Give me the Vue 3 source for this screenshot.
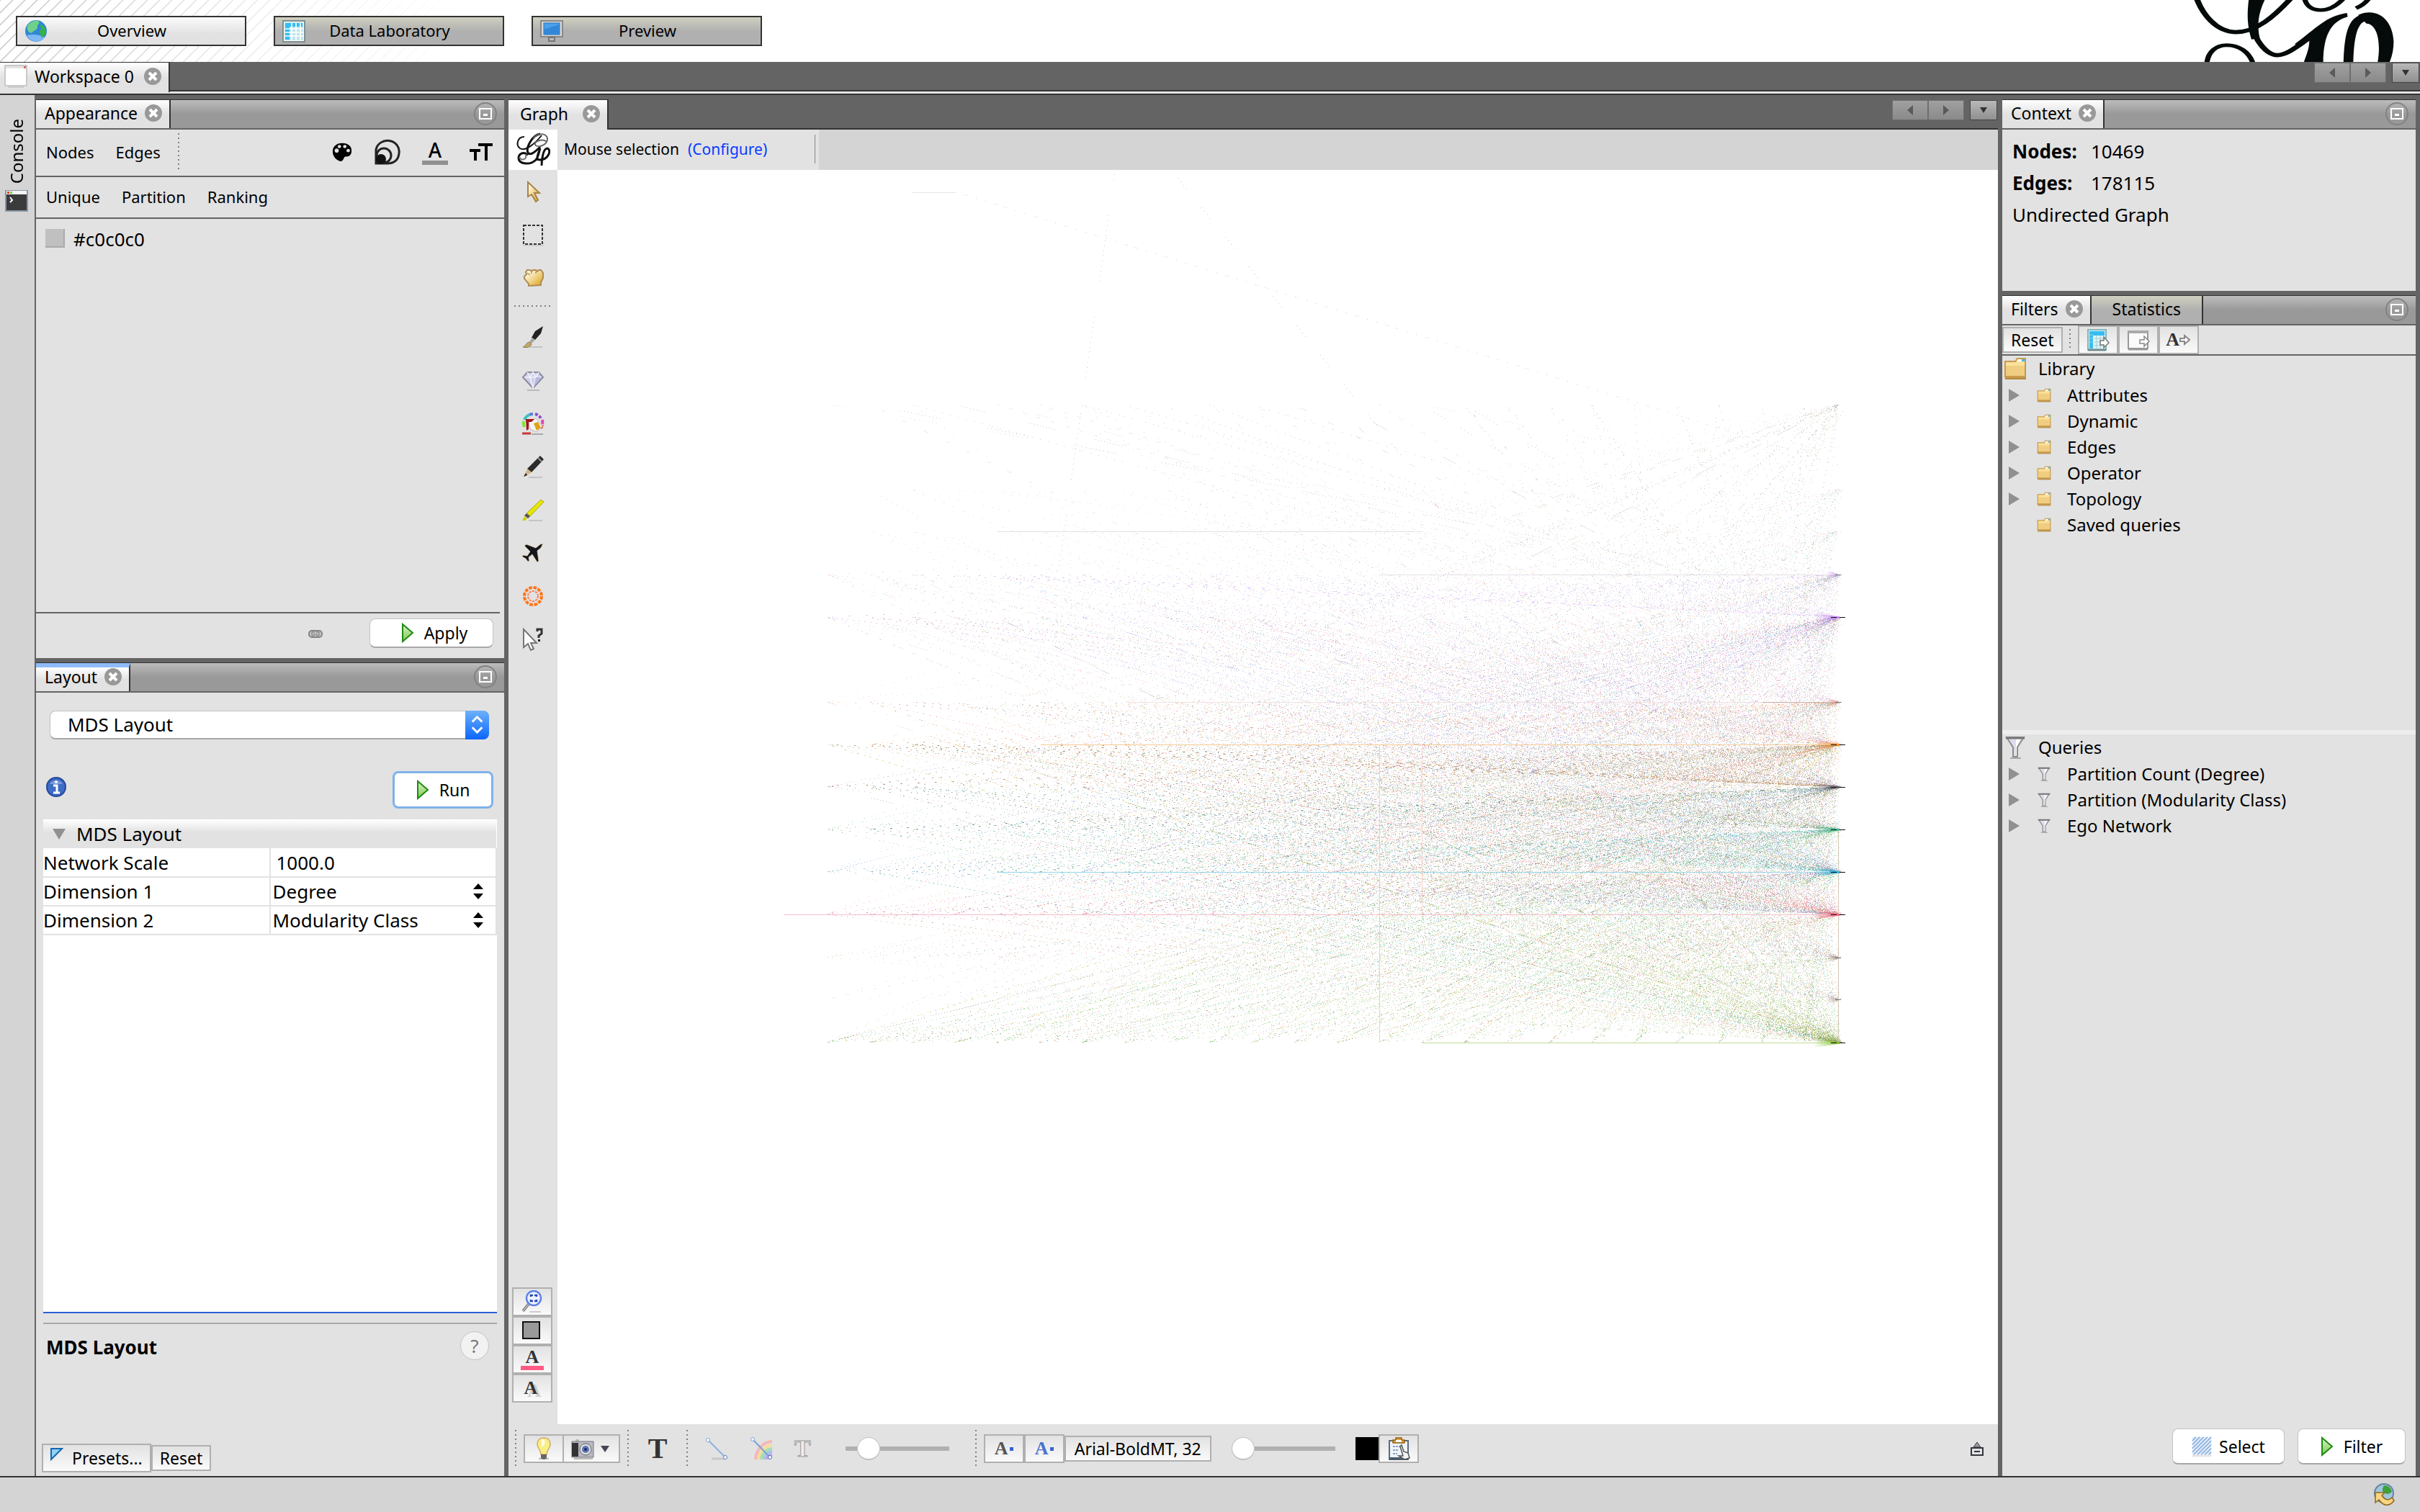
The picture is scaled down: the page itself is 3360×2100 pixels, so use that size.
<script setup>
import { ref, onMounted } from 'vue'

const perspectives = [
  { name: 'Overview', icon: 'globe', active: true },
  { name: 'Data Laboratory', icon: 'sheet', active: false },
  { name: 'Preview', icon: 'screen', active: false },
]

const icons = {
  globe: '<circle cx="16" cy="16" r="15" fill="#2f86d6"/><path d="M3 22a15 15 0 0 0 25 3c-6-4-16-5-25-3z" fill="#7fb8f5"/><path d="M6 6C10 2 18 0 20 3c2 3-3 4-2 7 1 4-5 5-7 8-3 2-6-1-7-4-1-3 0-6 2-8z" fill="#6fd08a"/><path d="M23 7c4 2 7 6 7 10-1 4-3 6-5 8-3 0-2-4-4-6-1-3 3-4 2-7-1-2-2-4 0-5z" fill="#35b34a"/>',
  sheet: '<rect x="1" y="2" width="30" height="29" fill="#fff" stroke="#7d8f8f" stroke-width="2"/><path d="M3 4h26v25H3z" fill="#bfe3ea"/><path d="M4 5h24v5H10v18H4z" fill="#35bdf2"/><path d="M13 5v24M19 5v24M25 5v24M4 13h25M4 18h25M4 23h25" stroke="#fff" stroke-width="1.6"/>',
  screen: '<rect x="1" y="2" width="30" height="22" fill="#d8d8d8" stroke="#888" stroke-width="2"/><rect x="5" y="5" width="22" height="16" fill="#4aa0ea" stroke="#2270b8"/><path d="M5 14L27 7v14H5z" fill="#3387d8"/><path d="M12 25h8v5h-8z" fill="#bbb" stroke="#777" stroke-width="2"/>',
  cursor: '<path d="M9 3v20l5-3 6 10 3-2-5-10h7z" fill="url(#gold)" stroke="#a9834c" stroke-width="2"/>',
  marquee: '<path d="M3 3h26v26H3z" fill="none" stroke="#333" stroke-width="2" stroke-dasharray="4 2"/><path d="M2 31h29" stroke="#bbb"/>',
  hand: '<path d="M10 27v-3l-6-7v-3l3-3-1-3 2-3h4l2 2 2-2h4l2 2 2-2h3l3 4v7l-3 6v4z" fill="url(#gold)" stroke="#b08c55" stroke-width="2"/><path d="M8 9l4 3M14 7v3M20 7v3" stroke="#c9a565" stroke-width="2"/>',
  brush: '<path d="M12 30h17" stroke="#c4c4c4" stroke-width="2"/><path d="M30 1l-3 10-8 9-5-3 5-9z" fill="#222"/><path d="M15 17l4 3-5 5-3-2z" fill="#a5a5a5"/><path d="M11 23l3 3c-2 5-7 5-12 4 4-1 4-6 9-7z" fill="#c0a86a" stroke="#8f7a48"/>',
  diamond: '<path d="M8 30h17" stroke="#b9b9b9" stroke-width="2"/><path d="M8 5h16l6 7-14 15L2 12z" fill="#cfcfe8" stroke="#8b8b9c" stroke-width="2"/><path d="M4 12h24M8 5l4 7 4 15 4-15 4-7M12 12l4-7 4 7" fill="none" stroke="#f4f4ff" stroke-width="1.5"/><path d="M20 12h8L17 25z" fill="#b6b8e0"/>',
  bucket: '<g fill="none" stroke-width="4"><path d="M4 11a13 13 0 0 1 7-7" stroke="#3fc0c0"/><path d="M11 4a13 13 0 0 1 5-1" stroke="#5a7de0"/><path d="M19 3a13 13 0 0 1 8 6" stroke="#8a50c8" stroke-dasharray="4 2"/><path d="M29 11a13 13 0 0 1 0 6" stroke="#e047b0"/><path d="M29 18a13 13 0 0 1-2 5" stroke="#e86a70"/><path d="M3 13a13 13 0 0 0 1 8" stroke="#7fe23c"/></g><path d="M10 15L20 9l9 11-8 8-9-4z" fill="#f4f4f4" stroke="#bbb"/><path d="M17 16l6-2 4 8-6 4z" fill="#e0a516"/><path d="M6 10h12l-4 4h-4v10l-3 2z" fill="#a3161a"/><path d="M1 30h12" stroke="#c8363a" stroke-width="3"/><path d="M14 31h16" stroke="#aaa" stroke-width="2"/>',
  pencil: '<path d="M10 31h19" stroke="#c4c4c4" stroke-width="2"/><path d="M26 1l5 5L14 24l-6-5z" fill="#2b2b2b"/><path d="M8 19l6 5-8 5-3 1 2-4z" fill="#cdb787"/><path d="M6 25l2 3-5 2z" fill="#222"/><path d="M23 4l5 5" stroke="#999" stroke-width="2"/>',
  marker: '<path d="M10 31h19" stroke="#c4c4c4" stroke-width="2"/><path d="M27 2l4 3L12 25l-5-4z" fill="#e6e600" stroke="#a8a820"/><path d="M7 21l5 4-3 3-5-4z" fill="#555"/><path d="M4 25l4 3-3 3H1z" fill="#d0d000"/>',
  plane: '<path d="M30 3l-3 6-5 4 2 14-2 2-7-11-5 4 1 5-2 1-3-4-5-3 1-2 6 1 4-6L4 6l3-2 13 5 6-5z" fill="#15151c" stroke="#e6d3a8" stroke-width=".8"/>',
  sun: '<circle cx="16" cy="16" r="12" fill="none" stroke="#ff7419" stroke-width="4" stroke-dasharray="4.600 1.700"/><circle cx="16" cy="16" r="7" fill="none" stroke="#ff7a55" stroke-width="2" stroke-dasharray="3 1.500"/>',
  help: '<path d="M3 2v25l6-5 4 9 4-2-4-8h8z" fill="#fff" stroke="#777" stroke-width="2"/><path d="M22 5V2h6v6l-4 3v3" fill="none" stroke="#333" stroke-width="3"/><path d="M23 16h3v3h-3z" fill="#222"/>',
  zoomfit: '<path d="M12 30h16" stroke="#ccc" stroke-width="2"/><path d="M11 19L3 29" stroke="#888" stroke-width="4"/><path d="M11 19L3 29" stroke="#ddd" stroke-width="1"/><circle cx="18" cy="11" r="10" fill="#eef4ff" stroke="#5f83e8" stroke-width="2.500"/><path d="M14 9V7h3M19 7h3v2M22 13v2h-3M17 15h-3v-2" fill="none" stroke="#2546b8" stroke-width="2.500"/>',
  square: '<path d="M3 4h23v23H3z" fill="#999" stroke="#111" stroke-width="2"/>',
  bulb: '<path d="M9 30h14" stroke="#bbb" stroke-width="2"/><path d="M16 1c-6 0-9 4-9 9 0 6 5 7 5 14h8c0-7 5-8 5-14 0-5-3-9-9-9z" fill="#f7ef86" stroke="#d6a865" stroke-width="1.500"/><path d="M13 3c3-1 6 2 4 7l-4 4z" fill="#fffde0"/><path d="M12 24h8v5l-3 2h-2l-3-2z" fill="#666"/>',
  camera: '<path d="M4 30h26" stroke="#bbb" stroke-width="2"/><path d="M6 3h5v3H6z" fill="#bbb"/><path d="M1 6h30v22H1z" fill="#b8b8c4" stroke="#777"/><path d="M1 8h9v19H1z" fill="#333"/><circle cx="20" cy="17" r="8" fill="#ddd" stroke="#666"/><circle cx="20" cy="17" r="5" fill="#5d74b5"/><circle cx="20" cy="17" r="2" fill="#182c66"/>',
  edge: '<path d="M9 30h19" stroke="#c8c8c8" stroke-width="3"/><path d="M4 4l24 24" stroke="#8fb0dc" stroke-width="2"/><circle cx="4" cy="4" r="2.500" fill="#fff" stroke="#7ba2d2"/><circle cx="28" cy="28" r="2.500" fill="#fff" stroke="#4f80bd"/>',
  rainbow: '<path d="M8 31C9 18 17 7 31 6" fill="none" stroke="#f3b8b8" stroke-width="4"/><path d="M12 31c1-11 8-18 19-20" fill="none" stroke="#f3dd9a" stroke-width="4"/><path d="M16 31c1-8 6-14 15-15" fill="none" stroke="#a8dcb0" stroke-width="4"/><path d="M20 31c1-6 4-10 11-11" fill="none" stroke="#a5c3ee" stroke-width="4"/><path d="M24 31c0-3 3-6 7-7" fill="none" stroke="#c9a5e0" stroke-width="4"/><path d="M4 3l24 25" stroke="#7ba2d2" stroke-width="2"/><circle cx="4" cy="3" r="2.500" fill="#fff" stroke="#7ba2d2"/><circle cx="28" cy="28" r="2.500" fill="#fff" stroke="#4f60bd"/>',
  clipboard: '<path d="M3 5h26v26H3z" fill="#eef4fb" stroke="#5d6b7d" stroke-width="2"/><path d="M3 30h26" stroke="#4d5b6d" stroke-width="4"/><path d="M8 8h16V4h-4V1h-8v3H8z" fill="#dca040" stroke="#94600c" stroke-width="1.500"/><path d="M12 4h8v3h-8z" fill="#fff"/><path d="M8 13h13M8 18h8M8 23h6" stroke="#8fa3bd" stroke-width="2" stroke-dasharray="3 1"/><path d="M20 11l3 9 6 2 2 7-7 2-8-5 6 0-4-13z" fill="#f4f4f4" stroke="#555" stroke-width="1.500"/>',
  tableArrow: '<path d="M2 2h25v28H2z" fill="#dff2f4" stroke="#7fb6bd" stroke-width="2"/><path d="M4 4h21v6H9v18H4z" fill="#35bdf2"/><path d="M10 14h15M10 19h15M10 24h15M14 10v18M19 10v18M4 9h5M4 14h5M4 19h5" stroke="#9fcfd6" stroke-width="1"/><path d="M2 30h25" stroke="#6f8a8c" stroke-width="3"/><path d="M19 17h5v-5l7 8-7 7v-4h-5z" fill="#fff" stroke="#777" stroke-width="1.500"/>',
  windowArrow: '<path d="M2 4h27v24H2z" fill="#fbfbfb" stroke="#999" stroke-width="2"/><path d="M2 5h27" stroke="#aaa" stroke-width="4"/><path d="M2 29h27" stroke="#999" stroke-width="3"/><path d="M18 16h6v-5l7 7-7 7v-4h-6z" fill="#fff" stroke="#888" stroke-width="1.500"/>',
  folder: '<path d="M2 5h14l2-4h13v28H1V5z" fill="#c79a4d"/><path d="M3 7h14l2-4h10v22H3z" fill="#fbe19b"/><path d="M3 12h26v14H3z" fill="#f0cd80"/><path d="M19 3h10v3H19z" fill="#fff"/><path d="M25 3h4v3h-4z" fill="#3fb8f5"/><path d="M2 30h29" stroke="#b58a3e" stroke-width="2"/>',
  funnel: '<path d="M4 2h24l-9 14v13h-6V16z" fill="#dcdcec" stroke="#8d8d8d" stroke-width="2"/><path d="M17 5h6l-5 10v12h-1z" fill="#fff"/><path d="M3 3h26" stroke="#777" stroke-width="3"/><path d="M9 31h15" stroke="#aaa" stroke-width="2"/>',
  hatch: '<path d="M1 1h30v28H1z" fill="#e4eefa"/><path d="M1 7l6-6M1 13L13 1M1 19L19 1M1 25L25 1M3 29L31 1M9 29L31 7M15 29l16-16M21 29l10-10M27 29l4-4" stroke="#8fb2de" stroke-width="2"/><path d="M1 31h30" stroke="#ddd" stroke-width="2"/>',
  update: '<circle cx="16" cy="14" r="13" fill="#9fc6dc" stroke="#6286a0" stroke-width="2"/><path d="M16 3c6 0 10 4 11 9-4 3-6 4-9 2-5-1-5-6-2-11z" fill="#3fa03a"/><path d="M4 13h13l-4 4c4 6 9 8 14 3l3 4c-6 9-15 8-21-1l-5 4z" fill="#f7d583" stroke="#8f6a1c" stroke-width="1.500"/>',
}

const pointerTools = ['cursor', 'marquee', 'hand']
const editTools = ['brush', 'diamond', 'bucket', 'pencil', 'marker', 'plane', 'sun', 'help']
const library = ['Attributes', 'Dynamic', 'Edges', 'Operator', 'Topology', 'Saved queries']
const queries = ['Partition Count (Degree)', 'Partition (Modularity Class)', 'Ego Network']

const view = ref(null)

// Modularity classes: y position, colour, relative number of edges
const classes = [
  { y: 326, c: [180, 175, 170], w: 1 },
  { y: 444, c: [190, 180, 190], w: 1 },
  { y: 502, c: [190, 185, 200], w: 1 },
  { y: 562, c: [205, 165, 235], w: 5 },
  { y: 621, c: [195, 135, 240], w: 9 },
  { y: 739, c: [225, 150, 135], w: 6 },
  { y: 798, c: [240, 145, 50], w: 13 },
  { y: 857, c: [95, 95, 105], w: 11 },
  { y: 916, c: [70, 190, 145], w: 11 },
  { y: 975, c: [50, 175, 220], w: 13 },
  { y: 1034, c: [250, 95, 130], w: 11 },
  { y: 1094, c: [175, 155, 150], w: 3 },
  { y: 1152, c: [190, 170, 175], w: 2 },
  { y: 1212, c: [125, 195, 40], w: 15 },
]
const HUB = 1778

function random(seed) {
  let s = seed
  return () => {
    s = (s * 1664525 + 1013904223) >>> 0
    return s / 4294967296
  }
}

function drawGraph(canvas) {
  canvas.width = canvas.clientWidth
  canvas.height = canvas.clientHeight
  const g = canvas.getContext('2d')
  const rnd = random(7)
  const total = classes.reduce((a, k) => a + k.w, 0)
  const pick = () => {
    let r = rnd() * total
    for (const k of classes) {
      r -= k.w
      if (r <= 0) return k
    }
    return classes[13]
  }
  // Very thin edge: only pixels whose centre lies on the line are lit
  const hair = (x1, y1, x2, y2, color, cover) => {
    g.fillStyle = color
    const dx = x2 - x1
    const dy = y2 - y1
    const flat = Math.abs(dx) >= Math.abs(dy)
    const n = Math.round(flat ? Math.abs(dx) : Math.abs(dy))
    for (let i = 0; i <= n; i++) {
      const t = i / (n || 1)
      const x = x1 + dx * t
      const y = y1 + dy * t
      const v = (flat ? y : x) + 0.37
      if (v - Math.floor(v) < cover) g.fillRect(Math.floor(x), Math.floor(y), 1, 1)
    }
  }
  for (let i = 0; i < 4800; i++) {
    const a = pick()
    const b = pick()
    if (a === b) continue
    const col = Math.floor(Math.pow(rnd(), 0.9) * 24)
    const x1 = 374 + 59 * col
    const x2 = HUB + (rnd() + rnd() - 1) * 8
    const mix = rnd()
    const m = a.c.map((v, j) => Math.round(v * mix + b.c[j] * (1 - mix)))
    hair(x1, a.y, x2, b.y, `rgba(${m},0.4)`, 0.07)
  }
  const grey = 'rgba(130,130,130,0.4)'
  hair(553, 31, HUB, 410, grey, 0.1)
  hair(774, 4, 696, 554, grey, 0.1)
  hair(856, 4, 1186, 414, grey, 0.1)
  for (let i = 0; i < 24; i++) hair(433 + 59 * i, 326, HUB - rnd() * 300, 560 + rnd() * 60, 'rgba(150,150,130,0.45)', 0.1)
  for (let i = 0; i < 14; i++) hair(HUB, 326, 1300 + rnd() * 460, 444 + rnd() * 300, 'rgba(140,150,120,0.5)', 0.12)

  const bar = (x, y, w, h, color) => {
    g.fillStyle = color
    g.fillRect(x, y, w, h)
  }
  bar(493, 31, 60, 1, '#e6e6e6')
  bar(610, 502, 591, 1, '#e2e2e2')
  bar(1142, 562, 636, 1, '#e6e0e8')
  bar(791, 739, 987, 1, '#f0e2e0')
  bar(1673, 739, 110, 1, '#cfa9a2')
  bar(671, 798, 1107, 1, '#f6c994')
  bar(610, 975, 1168, 1, '#94d6e8')
  bar(314, 1034, 1464, 1, '#f9bccb')
  bar(1201, 1212, 577, 1, '#c0da94')
  bar(1141, 798, 1, 414, '#e4d8a4')
  bar(1200, 798, 1, 236, '#f5d2ca')
  bar(1778, 916, 1, 296, '#d4c6b4')
  for (const k of classes) {
    if (k.w < 2) continue
    const big = k.w > 7
    const reach = big ? 34 : 16
    const glow = g.createLinearGradient(HUB - reach, 0, HUB, 0)
    glow.addColorStop(0, `rgba(${k.c},0)`)
    glow.addColorStop(1, `rgba(${k.c},0.8)`)
    g.fillStyle = glow
    g.beginPath()
    g.moveTo(HUB, k.y - 1)
    g.lineTo(HUB - reach, k.y - 6)
    g.lineTo(HUB - reach, k.y + 7)
    g.lineTo(HUB, k.y + 2)
    g.fill()
    bar(HUB - (big ? 10 : 4), k.y, big ? 20 : 8, 1, big ? '#111' : '#777')
    if (big) bar(HUB - 2, k.y - 1, 4, 3, `rgb(${k.c})`)
  }
}

onMounted(() => drawGraph(view.value))
</script>

<template>
  <div class="app">
    <svg class="defs" width="0" height="0" aria-hidden="true">
      <defs>
        <linearGradient id="gold" x1="0" y1="0" x2="1" y2="1">
          <stop offset="0.2" stop-color="#fff6dc" /><stop offset="0.8" stop-color="#e2b640" />
        </linearGradient>
        <linearGradient id="leaf" x1="0" y1="0" x2="0" y2="1">
          <stop offset="0" stop-color="#d8f2c8" /><stop offset="1" stop-color="#7cc850" />
        </linearGradient>
      </defs>
    </svg>

    <header class="banner">
      <div class="stripes"></div>
      <nav class="perspectives">
        <button v-for="p in perspectives" :key="p.name" class="perspective" :class="{ active: p.active }">
          <svg viewBox="0 0 32 32" width="32" height="32" v-html="icons[p.icon]" />
          <span>{{ p.name }}</span>
        </button>
      </nav>
      <svg class="brand" viewBox="900 0 620 258" preserveAspectRatio="none" aria-label="Gephi">
        <g fill="none" stroke="#050a0a">
          <path d="M928-10C945 60 985 132 1040 134C1100 134 1150 70 1200-8" stroke-width="17" />
          <path d="M1100-10C1078 70 1088 130 1105 170C1125 215 1145 230 1160 230C1190 228 1215 195 1262 148" stroke-width="17" />
          <path d="M1238-10C1242 25 1260 42 1285 42C1310 42 1330 25 1350-6M1424-8Q1410 20 1386 34" stroke-width="15" />
          <path d="M958 262C962 215 985 188 1015 188C1050 188 1078 215 1090 262" stroke-width="15" />
          <path d="M1364 262C1366 130 1380 72 1420 72" stroke-width="28" />
        </g>
        <path d="M1078 0h46c-20 60-22 110-14 160l-24 4c-10-50-14-90-8-164z" fill="#050a0a" />
        <path d="M1360 54C1300 66 1270 120 1210 184l18 10 24-26c0 34-8 60-16 92h56C1292 160 1310 90 1362 70z" fill="#050a0a" />
        <path d="M1392 62c56-36 100 24 102 112q0 46-12 86h-34c10-80 0-160-32-162z" fill="#050a0a" />
      </svg>
    </header>

    <div class="workspaces">
      <div class="tab">
        <svg viewBox="0 0 32 32" width="32" height="32"><path d="M1 1h30v28H1z" fill="#fff" stroke="#c9c9c9" stroke-width="2" /><path d="M2 2h28v3H2z" fill="#e4e4e4" /><path d="M27 2h3v3h-3z" fill="#d66" /><path d="M5 31h22" stroke="#ccc" stroke-width="2" /></svg>
        <span>Workspace 0</span>
        <button class="close" aria-label="Close"><svg viewBox="0 0 24 24"><circle cx="12" cy="12" r="12" /><path d="M7 7l10 10M17 7L7 17" /></svg></button>
      </div>
      <div class="pager">
        <button aria-label="Previous"><svg viewBox="0 0 12 16"><path d="M10 1v14L2 8z" /></svg></button><button aria-label="Next"><svg viewBox="0 0 12 16"><path d="M2 1v14l8-7z" /></svg></button>
        <button class="menu" aria-label="List"><svg viewBox="0 0 12 16"><path d="M1 4h10L6 12z" /></svg></button>
      </div>
    </div>

    <div class="workbench">
      <aside class="rail">
        <span class="vertical">Console</span>
        <svg viewBox="0 0 32 30" width="32" height="30"><path d="M1 1h30v28H1z" fill="#3b3b3b" stroke="#8796a5" stroke-width="2" /><path d="M2 1h28v5H2z" fill="#f3f3f3" /><path d="M3 2h3v3H3z" fill="#e33" /><path d="M7 2h3v3H7z" fill="#8c3" /><path d="M7 10l3 4-3 3" fill="none" stroke="#fff" stroke-width="2" /></svg>
      </aside>

      <div class="column left">
        <section class="panel appearance">
          <div class="tabs">
            <div class="tab"><span>Appearance</span><button class="close" aria-label="Close"><svg viewBox="0 0 24 24"><circle cx="12" cy="12" r="12" /><path d="M7 7l10 10M17 7L7 17" /></svg></button></div>
            <button class="minimize" aria-label="Minimize"><svg viewBox="0 0 32 32"><circle cx="16" cy="16" r="15" /><path d="M8 9h16v14H8z" /><path d="M13 16h6v3h-6z" class="dot" /></svg></button>
          </div>
          <div class="kinds">
            <button class="plain">Nodes</button><button class="plain">Edges</button>
            <i class="vdots"></i>
            <span class="modes">
              <svg viewBox="0 0 32 32"><path d="M16 3c9 0 14 5 14 11 0 7-4 9-9 9-3 0-2 6-7 7-8-2-12-8-12-15C2 8 8 3 16 3z" fill="#000" /><g fill="#e2e2e2"><circle cx="8" cy="14" r="3" /><circle cx="12" cy="8" r="2.500" /><circle cx="20" cy="8" r="2.500" /><circle cx="25" cy="14" r="2.500" /></g></svg>
              <svg viewBox="0 0 36 36" width="36" height="36"><path d="M2 22V15A16 15 0 1 1 34 20C33 30 26 34 18 34H2z" fill="none" stroke="#222" stroke-width="3" /><circle cx="13" cy="23" r="10" fill="none" stroke="#222" stroke-width="3" /><circle cx="9" cy="28" r="7" fill="#111" /></svg>
              <b class="letter">A</b>
              <svg viewBox="0 0 32 26" width="32" height="26"><path d="M12 3h20M23 3v22M0 11h15M8 11v14" fill="none" stroke="#000" stroke-width="4" /></svg>
            </span>
          </div>
          <div class="kinds second"><button class="plain">Unique</button><button class="plain">Partition</button><button class="plain">Ranking</button></div>
          <div class="color"><i class="swatch"></i><span>#c0c0c0</span></div>
          <div class="apply">
            <svg viewBox="0 0 20 12" width="20" height="12"><rect x="1" y="1" width="18" height="9" rx="4" fill="#c4c4c4" stroke="#858585" stroke-width="2" /><path d="M9 3h-4v5h4M11 3h4v5h-4M7 6h6" fill="none" stroke="#777" stroke-width="1" /></svg>
            <button class="mac"><svg class="play" viewBox="0 0 18 28"><path d="M2 2v24l14-12z" /></svg>Apply</button>
          </div>
        </section>

        <section class="panel layout">
          <div class="tabs">
            <div class="tab focused"><span>Layout</span><button class="close" aria-label="Close"><svg viewBox="0 0 24 24"><circle cx="12" cy="12" r="12" /><path d="M7 7l10 10M17 7L7 17" /></svg></button></div>
            <button class="minimize" aria-label="Minimize"><svg viewBox="0 0 32 32"><circle cx="16" cy="16" r="15" /><path d="M8 9h16v14H8z" /><path d="M13 16h6v3h-6z" class="dot" /></svg></button>
          </div>
          <div class="combo">
            <select aria-label="Layout algorithm"><option>MDS Layout</option></select>
            <span class="stepper"><svg viewBox="0 0 34 40"><path d="M10 16l7-7 7 7M10 24l7 7 7-7" /></svg></span>
          </div>
          <div class="runline">
            <svg viewBox="0 0 28 28" width="28" height="28"><circle cx="14" cy="14" r="13" fill="#3f6cc4" stroke="#23499b" stroke-width="2" /><path d="M5 10a10 9 0 0 1 18 0z" fill="#7d9cdc" /><circle cx="14" cy="7" r="2" fill="#fff" /><path d="M10 12h5v9M10 22h9" fill="none" stroke="#fff" stroke-width="3" /></svg>
            <button class="mac run"><svg class="play" viewBox="0 0 18 28"><path d="M2 2v24l14-12z" /></svg>Run</button>
          </div>
          <div class="sheet">
            <table>
              <thead><tr><th colspan="2"><span class="head"><i class="tri down"></i>MDS Layout</span></th></tr></thead>
              <tbody>
                <tr><td><label for="scale">Network Scale</label></td><td><input id="scale" value="1000.0" /></td></tr>
                <tr><td><label for="d1">Dimension 1</label></td><td><span class="pick"><select id="d1"><option>Degree</option></select><svg viewBox="0 0 16 24"><path d="M1 9l7-8 7 8zM1 15l7 8 7-8z" /></svg></span></td></tr>
                <tr><td><label for="d2">Dimension 2</label></td><td><span class="pick"><select id="d2"><option>Modularity Class</option></select><svg viewBox="0 0 16 24"><path d="M1 9l7-8 7 8zM1 15l7 8 7-8z" /></svg></span></td></tr>
              </tbody>
            </table>
          </div>
          <div class="about"><strong>MDS Layout</strong><button class="what">?</button></div>
          <div class="presets">
            <button class="flat tall"><svg viewBox="0 0 18 18" width="18" height="18"><path d="M1 1h15L1 16z" fill="#8fd0f5" stroke="#1767ae" stroke-width="2" /></svg>Presets...</button><button class="flat">Reset</button>
          </div>
        </section>
      </div>

      <main class="graph">
        <div class="graph-tabs">
          <div class="tab"><span>Graph</span><button class="close" aria-label="Close"><svg viewBox="0 0 24 24"><circle cx="12" cy="12" r="12" /><path d="M7 7l10 10M17 7L7 17" /></svg></button></div>
          <div class="pager">
            <button aria-label="Previous"><svg viewBox="0 0 12 16"><path d="M10 1v14L2 8z" /></svg></button><button aria-label="Next"><svg viewBox="0 0 12 16"><path d="M2 1v14l8-7z" /></svg></button>
            <button class="menu" aria-label="List"><svg viewBox="0 0 12 16"><path d="M1 4h10L6 12z" /></svg></button>
          </div>
        </div>
        <div class="selection">
          <span class="mini">
            <svg viewBox="0 0 48 48" width="48" height="48" fill="none" stroke="#111"><path d="M12 6C2 6 0 18 6 22C14 27 28 14 36 4" stroke-width="2" /><path d="M34 2C22 4 14 22 17 28C20 34 30 24 34 20" stroke-width="3" /><path d="M24 10C28 0 44 0 44 9C44 18 30 22 27 17C25 12 38 8 43 13" stroke="#666" stroke-width="2" /><path d="M16 32C14 26 4 28 4 36C5 44 20 46 28 38C32 33 32 28 34 22C30 32 28 38 33 38C46 38 50 24 44 22C38 22 36 38 36 46" stroke-width="3" /><path d="M5 34C8 40 16 38 14 30" stroke-width="2" stroke="#777" /></svg>
          </span>
          <div class="mode"><span>Mouse selection</span><a href="#">(Configure)</a><i></i></div>
        </div>
        <div class="stage">
          <div class="tools">
            <button v-for="t in pointerTools" :key="t" class="tool" :aria-label="t"><svg viewBox="0 0 32 32" v-html="icons[t]" /></button>
            <i class="hdots"></i>
            <button v-for="t in editTools" :key="t" class="tool" :aria-label="t"><svg viewBox="0 0 32 32" v-html="icons[t]" /></button>
            <div class="viewtools">
              <button class="flat sq" aria-label="Center"><svg viewBox="0 0 32 32" v-html="icons.zoomfit" /></button>
              <button class="flat sq" aria-label="Background"><svg viewBox="0 0 32 32" v-html="icons.square" /></button>
              <button class="flat sq" aria-label="Label color"><b class="serif under">A</b></button>
              <button class="flat sq" aria-label="Label visibility"><b class="serif shade">A</b></button>
            </div>
          </div>
          <canvas ref="view" class="canvas"></canvas>
        </div>
        <div class="bottom">
          <i class="vdots"></i>
          <span class="group"><button class="flat sq" aria-label="Light"><svg viewBox="0 0 32 32" v-html="icons.bulb" /></button><button class="flat cam" aria-label="Screenshot"><svg viewBox="0 0 32 32" v-html="icons.camera" /><i class="caret"></i></button></span>
          <i class="vdots"></i>
          <b class="serif slab">T</b>
          <i class="vdots"></i>
          <span class="links">
            <svg viewBox="0 0 32 32" v-html="icons.edge" /><svg viewBox="0 0 32 32" v-html="icons.rainbow" /><b class="serif slab hollow">T</b>
          </span>
          <input type="range" class="slider" value="15" aria-label="Edge weight" />
          <i class="vdots"></i>
          <span class="group"><button class="flat sq"><b class="serif grey">A</b><i class="mark"></i></button><button class="flat sq"><b class="serif blue">A</b><i class="mark"></i></button><button class="flat font">Arial-BoldMT, 32</button></span>
          <input type="range" class="slider second" value="0" aria-label="Font size" />
          <span class="group"><button class="black" aria-label="Text color"></button><button class="flat sq" aria-label="Attributes"><svg viewBox="0 0 32 32" v-html="icons.clipboard" /></button></span>
          <svg class="expand" viewBox="0 0 20 20" width="20" height="20"><path d="M10 1l5 7H5z" fill="#999" stroke="#33363f" /><path d="M2 9h16v10H2zM6 14h8" fill="#e2e2e2" stroke="#33363f" stroke-width="2" /></svg>
        </div>
      </main>

      <div class="column right">
        <section class="panel context">
          <div class="tabs">
            <div class="tab"><span>Context</span><button class="close" aria-label="Close"><svg viewBox="0 0 24 24"><circle cx="12" cy="12" r="12" /><path d="M7 7l10 10M17 7L7 17" /></svg></button></div>
            <button class="minimize" aria-label="Minimize"><svg viewBox="0 0 32 32"><circle cx="16" cy="16" r="15" /><path d="M8 9h16v14H8z" /><path d="M13 16h6v3h-6z" class="dot" /></svg></button>
          </div>
          <dl><dt>Nodes:</dt><dd>10469</dd><dt>Edges:</dt><dd>178115</dd></dl>
          <p>Undirected Graph</p>
        </section>
        <section class="panel filters">
          <div class="tabs">
            <div class="tab"><span>Filters</span><button class="close" aria-label="Close"><svg viewBox="0 0 24 24"><circle cx="12" cy="12" r="12" /><path d="M7 7l10 10M17 7L7 17" /></svg></button></div>
            <div class="tab idle"><span>Statistics</span></div>
            <button class="minimize" aria-label="Minimize"><svg viewBox="0 0 32 32"><circle cx="16" cy="16" r="15" /><path d="M8 9h16v14H8z" /><path d="M13 16h6v3h-6z" class="dot" /></svg></button>
          </div>
          <div class="filterbar">
            <button class="flat">Reset</button><i class="vdots"></i>
            <span class="group"><button class="flat sq" aria-label="Export column"><svg viewBox="0 0 32 32" v-html="icons.tableArrow" /></button><button class="flat sq" aria-label="New workspace"><svg viewBox="0 0 32 32" v-html="icons.windowArrow" /></button><button class="flat sq" aria-label="Hide labels"><b class="serif dark">A</b><svg class="arrow" viewBox="0 0 16 16"><path d="M1 6h6V2l7 6-7 6v-4H1z" fill="#fff" stroke="#888" stroke-width="2" /></svg></button></span>
          </div>
          <div class="tree library">
            <div class="root"><svg viewBox="0 0 32 32" v-html="icons.folder" />Library</div>
            <ul>
              <li v-for="(f, i) in library" :key="f"><i class="tri" :class="{ none: i === 5 }"></i><svg viewBox="0 0 32 32" v-html="icons.folder" />{{ f }}</li>
            </ul>
          </div>
          <div class="splitter"></div>
          <div class="tree">
            <div class="root"><svg viewBox="0 0 32 32" v-html="icons.funnel" />Queries</div>
            <ul>
              <li v-for="q in queries" :key="q"><i class="tri"></i><svg viewBox="0 0 32 32" v-html="icons.funnel" />{{ q }}</li>
            </ul>
          </div>
          <div class="actions">
            <button class="mac big"><svg viewBox="0 0 32 32" width="28" height="28" v-html="icons.hatch" />Select</button>
            <button class="mac big"><svg class="play" viewBox="0 0 18 28"><path d="M2 2v24l14-12z" /></svg>Filter</button>
          </div>
        </section>
      </div>
    </div>

    <footer class="status"><svg viewBox="0 0 32 32" width="32" height="32" v-html="icons.update" /></footer>
  </div>
</template>

<style>
body { margin: 0; background: #646464; }
</style>

<style scoped>
* { box-sizing: border-box; }
.app { min-height: 100vh; display: flex; flex-direction: column; background: #646464; font-family: "Noto Sans", "Open Sans", sans-serif; font-size: 22px; line-height: 28px; color: #000; }
.defs { position: absolute; }
button, input, select { font: inherit; color: inherit; margin: 0; }
button { padding: 0; border: 0; background: none; display: flex; align-items: center; white-space: nowrap; }
svg { display: block; flex: none; }
i { flex: none; }

.banner { position: relative; height: 86px; background: #fff; display: flex; align-items: center; justify-content: space-between; overflow: hidden; }
.stripes { position: absolute; inset: 0 auto 0 0; width: 640px; background: repeating-linear-gradient(135deg, #d0d0d0 0 1px, #fff 2px 12px); -webkit-mask-image: linear-gradient(90deg, #000, transparent); mask-image: linear-gradient(90deg, #000, transparent); }
.perspectives { position: relative; display: flex; gap: 38px; padding-left: 22px; }
.perspective { width: 320px; height: 42px; border: 2px solid #333; padding: 0 10px; background: linear-gradient(#d0d0c0, #b0b0b0 50%); }
.perspective.active { background: linear-gradient(#fafafa, #e2e2e2 60%); }
.perspective span { flex: 1; padding: 0 30px 2px 0; }
.brand { width: 300px; height: 86px; margin-right: 24px; }

.workspaces { display: flex; justify-content: space-between; height: 46px; border-bottom: 2px solid #333; background: linear-gradient(#646464 39px, #333 39px 41px, #e2e2e2 41px); }
.tab { display: flex; align-items: center; gap: 10px; height: 40px; padding: 0 10px 3px 12px; background: linear-gradient(#fff, #e2e2e2 50%); border-right: 2px solid #333; border-top: 1px solid #333; font-size: 23px; }
.workspaces .tab { height: 42px; padding: 0 10px 3px 6px; gap: 10px; }
.workspaces .close { margin-left: 4px; }
.close svg { width: 24px; height: 24px; fill: #999; }
.close path { stroke: #fff; stroke-width: 4; }
.pager { display: flex; padding-top: 1px; }
.pager button { width: 50px; height: 28px; justify-content: center; background: linear-gradient(#a0a0a0, #8a8a8a); border: 1px solid #6e6e6e; }
.pager svg { width: 12px; height: 16px; fill: #5a5a5a; }
.pager .menu { width: 38px; margin-left: 8px; margin-right: 1px; background: linear-gradient(#b8b8b8, #909090); border-color: #444; }
.pager .menu svg { fill: #333; }

.workbench { flex: 1; display: flex; min-height: 0; padding-right: 6px; border-bottom: 2px solid #333; }
.rail { width: 50px; background: #d4d4d4; border-right: 2px solid #646464; display: flex; flex-direction: column; align-items: center; gap: 9px; padding: 33px 2px 0 0; }
.vertical { writing-mode: vertical-rl; transform: rotate(180deg); font-size: 24px; line-height: 28px; }
.column { display: flex; flex-direction: column; gap: 6px; padding-top: 6px; flex: none; }
.left { width: 650px; margin-right: 6px; }
.right { width: 574px; margin-left: 6px; }
.panel { display: flex; flex-direction: column; background: #e2e2e2; flex-basis: 0; min-height: 0; }
.appearance { flex-grow: 776; }
.layout { flex-grow: 1130; }
.context { flex-grow: 266; }
.filters { flex-grow: 1640; }
.tabs { display: flex; height: 42px; background: linear-gradient(#bcbcbc, #999 50%); border-bottom: 2px solid #646464; border-top: 1px solid #333; flex: none; }
.tabs .tab { border-top: 0; height: 39px; }
.tabs .tab.focused { border-top: 6px solid #8fbcf8; padding-bottom: 8px; }
.tab.idle { padding: 0 29px 3px; background: linear-gradient(#d0d0c0, #b0b0b0 50%); }
.minimize { margin: 0 10px 2px auto; }
.minimize svg { width: 32px; height: 32px; fill: none; stroke: #828282; stroke-width: 2; }
.minimize path { stroke: #fff; }
.minimize .dot { stroke: none; fill: #fff; }

.kinds { display: flex; align-items: center; height: 66px; padding: 0 16px 2px 14px; border-bottom: 2px solid #646464; gap: 30px; }
.kinds.second { height: 58px; }
.vdots { width: 2px; height: 52px; background: repeating-linear-gradient(#808080 0 2px, transparent 2px 6px); }
.kinds .vdots { margin-left: -6px; }
.modes { margin-left: auto; display: flex; align-items: center; gap: 30px; }
.modes svg:first-child { width: 30px; height: 30px; }
.letter { width: 36px; text-align: center; font-weight: 500; font-size: 28px; line-height: 30px; border-bottom: 6px solid #909090; }
.color { flex: 1; display: flex; align-items: flex-start; gap: 12px; padding: 12px 13px; font-size: 26px; line-height: 32px; }
.swatch { width: 27px; height: 26px; background: #c0c0c0; border: solid #aaa; border-width: 0 2px 2px 0; margin-top: 2px; }
.apply { height: 64px; margin-right: 6px; border-top: 2px solid #646464; display: flex; justify-content: flex-end; align-items: flex-start; gap: 65px; padding: 7px 9px 0 0; }
.apply > svg { margin-top: 16px; }
.mac { justify-content: center; gap: 14px; height: 41px; width: 172px; padding-left: 8px; border-radius: 8px; background: #fff; border: 1px solid #c4c4c4; border-bottom: 2px solid #a8a8a8; font-size: 23px; }
.play { width: 18px; height: 28px; fill: url(#leaf); stroke: #1f8a10; stroke-width: 2; }

.combo { position: relative; height: 40px; margin: 25px 21px 0 19px; }
.combo select { width: 100%; height: 40px; appearance: none; background: #fff; border: 1px solid #c0c0c0; border-bottom: 2px solid #a8a8a8; border-radius: 8px; padding: 0 24px 2px; font-size: 26px; }
.stepper { position: absolute; right: 0; top: 0; width: 33px; height: 40px; border-radius: 0 8px 8px 0; background: linear-gradient(#6db0fb, #0a66fb); pointer-events: none; }
.stepper path { fill: none; stroke: #fff; stroke-width: 3; }
.runline { display: flex; align-items: center; justify-content: space-between; margin: 44px 15px 15px 14px; }
.runline > svg { margin-bottom: 8px; }
.run { width: 140px; height: 52px; padding-left: 0; border: 3px solid #7fb2ea; }
.sheet { flex: 1; margin: 0 10px; background: #fff; border-bottom: 2px solid #2a5fd8; font-size: 26px; line-height: 36px; }
table { width: 100%; border-collapse: collapse; table-layout: fixed; }
th { padding: 0; height: 40px; text-align: left; font-weight: 400; background: linear-gradient(#fff, #e2e2e2 45%); }
.head { display: flex; align-items: center; gap: 15px; padding-left: 13px; }
td { height: 40px; padding: 0; border: 2px solid #e2e2e2; border-left: 0; border-top: 0; }
td input { width: 100%; border: 0; outline: 0; padding: 0 8px; background: none; height: 36px; display: block; }
.pick { display: flex; align-items: center; padding: 0 16px 0 3px; }
.pick select { flex: 1; appearance: none; border: 0; background: none; height: 36px; padding: 0; }
.pick svg { width: 16px; height: 24px; }
.tri { width: 0; height: 0; border: 9px solid transparent; border-left: 15px solid #909090; border-right: 0; }
.tri.down { border: 9px solid transparent; border-top: 15px solid #909090; border-bottom: 0; }
.tri.none { border-color: transparent; }
.about { display: flex; justify-content: space-between; align-items: flex-start; height: 168px; margin: 13px 10px 0; border-top: 2px solid #a8a8a8; padding: 10px 11px 0 4px; font-size: 26px; line-height: 44px; }
.what { width: 40px; height: 40px; border-radius: 50%; justify-content: center; background: #f2f2f2; border: 1px solid #c4c4c4; color: #777; }
.presets { display: flex; align-items: center; padding: 0 8px 5px; }
.flat { height: 36px; padding: 0 10px; border: 2px solid #b0b0b0; background: linear-gradient(#e2e2e2, #fafafa); font-size: 23px; }
.flat.tall { height: 40px; gap: 12px; }
.flat.tall svg { margin-bottom: 10px; }

.graph { flex: 1; min-width: 0; display: flex; flex-direction: column; }
.graph-tabs { display: flex; justify-content: space-between; height: 48px; padding-top: 6px; background: linear-gradient(#646464 46px, #333 46px); }
.graph-tabs .tab { height: 42px; gap: 20px; padding: 0 10px 3px 16px; }
.selection { display: flex; height: 56px; background: #d4d4d4; }
.mini { width: 68px; background: #fff; display: flex; align-items: center; justify-content: center; }
.mode { display: flex; align-items: center; gap: 12px; padding: 0 5px 2px 9px; background: #e2e2e2; font-size: 21px; }
.mode a { color: #0a3cff; text-decoration: none; }
.mode i { width: 1px; height: 40px; margin-left: 54px; background: #888; }
.stage { flex: 1; display: flex; min-height: 0; }
.tools { width: 68px; background: #e2e2e2; display: flex; flex-direction: column; align-items: center; }
.tool { height: 60px; width: 68px; justify-content: center; }
.tool svg, .sq svg, .cam svg { width: 32px; height: 32px; }
.hdots { width: 52px; height: 2px; margin: 8px 0 12px; background: repeating-linear-gradient(90deg, #808080 0 2px, transparent 2px 6px); }
.viewtools { margin-top: auto; margin-bottom: 30px; padding-right: 2px; display: flex; flex-direction: column; }
.sq { width: 56px; height: 40px; padding: 0; justify-content: center; }
.serif { font-family: "Liberation Serif", serif; font-size: 26px; line-height: 24px; color: #333; }
.under { border-bottom: 6px solid #ff5a85; padding: 0 7px; }
.shade { text-shadow: 5px 4px 0 #ccc; padding-right: 4px; }
.grey { color: #555; }
.blue { color: #4a6fd0; }
.mark { width: 5px; height: 5px; background: #3a60d0; margin-left: 2px; }
.slab { font-size: 40px; line-height: 36px; }
.hollow { color: #eee; -webkit-text-stroke: 1px #999; font-size: 34px; }
.canvas { display: block; flex: 1; min-width: 0; width: 0; height: 100%; background: #fff; }
.bottom { height: 72px; background: #e2e2e2; display: flex; align-items: center; padding: 0 19px 4px 9px; }
.group { display: flex; align-items: center; margin: 0 10px; }
.cam { width: 80px; height: 40px; margin-left: -2px; }
.caret { border: 6px solid transparent; border-top: 9px solid #445; border-bottom: 0; margin-left: 9px; }
.bottom > .slab { margin: 0 26px; width: 28px; text-align: center; }
.links { display: flex; align-items: center; gap: 30px; margin: 0 48px 0 24px; }
.links svg { width: 32px; height: 32px; }
.slider { appearance: none; width: 144px; height: 36px; background: linear-gradient(#b0b0b0, #b0b0b0) center / 100% 6px no-repeat; margin: 0 36px 0 0; }
.slider::-webkit-slider-thumb { appearance: none; width: 32px; height: 32px; border-radius: 50%; background: #fff; border: 1px solid #c0c0c0; border-bottom-width: 2px; }
.slider.second { margin: 0 18px; }
.font { padding: 0 12px; }
.black { width: 32px; height: 32px; background: #000; }
.expand { margin-left: auto; }

dl { display: grid; grid-template-columns: 109px 1fr; margin: 8px 14px 0; font-size: 26px; line-height: 44px; }
dt { font-weight: 700; }
dd { margin: 0; }
p { margin: 0 14px; font-size: 26px; line-height: 44px; }
.filterbar { display: flex; align-items: center; height: 42px; border-bottom: 2px solid #646464; }
.filterbar .vdots { height: 30px; margin-left: 9px; }
.dark + .arrow { width: 16px; height: 16px; }
.tree { font-size: 24px; line-height: 34px; }
.library { height: 520px; }
.root { display: flex; align-items: center; gap: 16px; padding: 0 0 2px 2px; height: 38px; }
.root svg { width: 32px; height: 32px; }
ul { list-style: none; margin: 0; padding: 0 0 0 9px; }
li { display: flex; align-items: center; height: 36px; padding-bottom: 2px; }
li svg { width: 20px; height: 20px; margin: 0 22px 0 24px; }
.splitter { height: 6px; background: #eee; }
.actions { display: flex; justify-content: flex-end; gap: 18px; margin-top: auto; padding: 0 14px 16px 0; }
.big { height: 50px; width: 156px; padding-left: 0; gap: 10px; }
.big + .big { width: 150px; gap: 14px; }

.status { height: 48px; background: #d4d4d4; display: flex; align-items: center; justify-content: flex-end; padding-right: 34px; }
</style>
